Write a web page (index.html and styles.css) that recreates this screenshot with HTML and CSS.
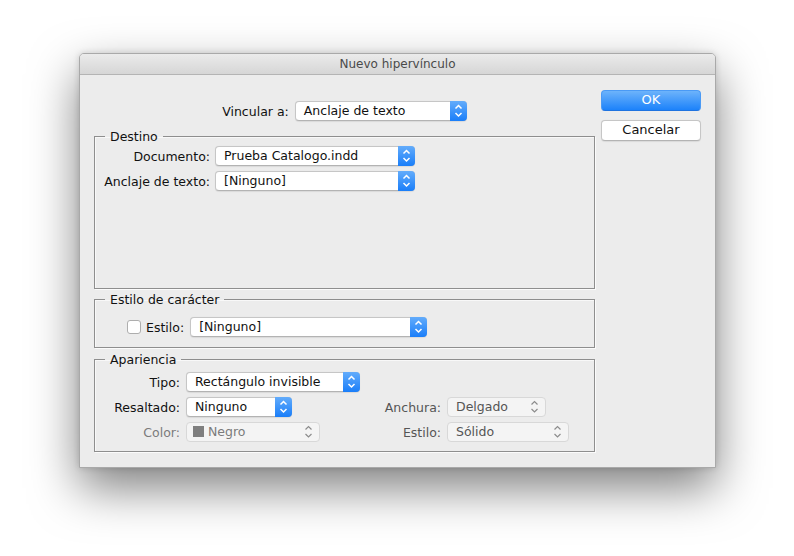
FILE: index.html
```html
<!DOCTYPE html>
<html lang="es">
<head>
<meta charset="utf-8">
<title>Nuevo hipervínculo</title>
<link rel="stylesheet" href="styles.css">
</head>
<body>
<div class="window">
  <div class="titlebar">Nuevo hipervínculo</div>
  <div class="content">
    <div class="main">
      <div class="link-row">
        <span class="label">Vincular a:</span>
        <div class="popup pw-vinc"><span class="val">Anclaje de texto</span><span class="step"><svg width="17" height="20" viewBox="0 0 17 20"><path d="M5.5 7.5 L8.5 4.5 L11.5 7.5 M5.5 12 L8.5 15 L11.5 12" fill="none" stroke="#fff" stroke-width="1.5"/></svg></span></div>
      </div>

      <fieldset class="group g-destino">
        <legend>Destino</legend>
        <div class="form-grid dest-grid">
          <span class="label">Documento:</span>
          <div class="popup pw-doc"><span class="val">Prueba Catalogo.indd</span><span class="step"><svg width="17" height="20" viewBox="0 0 17 20"><path d="M5.5 7.5 L8.5 4.5 L11.5 7.5 M5.5 12 L8.5 15 L11.5 12" fill="none" stroke="#fff" stroke-width="1.5"/></svg></span></div>
          <span class="label">Anclaje de texto:</span>
          <div class="popup pw-doc"><span class="val">[Ninguno]</span><span class="step"><svg width="17" height="20" viewBox="0 0 17 20"><path d="M5.5 7.5 L8.5 4.5 L11.5 7.5 M5.5 12 L8.5 15 L11.5 12" fill="none" stroke="#fff" stroke-width="1.5"/></svg></span></div>
        </div>
      </fieldset>

      <fieldset class="group g-estilo">
        <legend>Estilo de carácter</legend>
        <div class="estilo-row">
          <span class="checkbox"></span>
          <span class="label">Estilo:</span>
          <div class="popup pw-estilo"><span class="val">[Ninguno]</span><span class="step"><svg width="17" height="20" viewBox="0 0 17 20"><path d="M5.5 7.5 L8.5 4.5 L11.5 7.5 M5.5 12 L8.5 15 L11.5 12" fill="none" stroke="#fff" stroke-width="1.5"/></svg></span></div>
        </div>
      </fieldset>

      <fieldset class="group g-apar">
        <legend>Apariencia</legend>
        <div class="apar-grid">
          <span class="label">Tipo:</span>
          <div class="popup pw-tipo"><span class="val">Rectángulo invisible</span><span class="step"><svg width="17" height="20" viewBox="0 0 17 20"><path d="M5.5 7.5 L8.5 4.5 L11.5 7.5 M5.5 12 L8.5 15 L11.5 12" fill="none" stroke="#fff" stroke-width="1.5"/></svg></span></div>
          <span></span>

          <span class="label">Resaltado:</span>
          <div class="popup pw-res"><span class="val">Ninguno</span><span class="step"><svg width="17" height="20" viewBox="0 0 17 20"><path d="M5.5 7.5 L8.5 4.5 L11.5 7.5 M5.5 12 L8.5 15 L11.5 12" fill="none" stroke="#fff" stroke-width="1.5"/></svg></span></div>
          <div class="right-pair">
            <span class="label dim">Anchura:</span>
            <div class="popup disabled pw-anch"><span class="val dim">Delgado</span><span class="step"><svg width="17" height="20" viewBox="0 0 17 20"><path d="M5.5 7.5 L8.5 4.5 L11.5 7.5 M5.5 12 L8.5 15 L11.5 12" fill="none" stroke="#8c8c8c" stroke-width="1.2"/></svg></span></div>
          </div>

          <span class="label dim2">Color:</span>
          <div class="popup disabled pw-color"><span class="val dim2"><span class="swatch"></span>Negro</span><span class="step"><svg width="17" height="20" viewBox="0 0 17 20"><path d="M5.5 7.5 L8.5 4.5 L11.5 7.5 M5.5 12 L8.5 15 L11.5 12" fill="none" stroke="#8c8c8c" stroke-width="1.2"/></svg></span></div>
          <div class="right-pair">
            <span class="label dim">Estilo:</span>
            <div class="popup disabled pw-sol"><span class="val dim">Sólido</span><span class="step"><svg width="17" height="20" viewBox="0 0 17 20"><path d="M5.5 7.5 L8.5 4.5 L11.5 7.5 M5.5 12 L8.5 15 L11.5 12" fill="none" stroke="#8c8c8c" stroke-width="1.2"/></svg></span></div>
          </div>
        </div>
      </fieldset>
    </div>

    <div class="buttons">
      <button class="btn btn-ok">OK</button>
      <button class="btn btn-cancel">Cancelar</button>
    </div>
  </div>
</div>
</body>
</html>
```

FILE: styles.css
```css
* { box-sizing: border-box; }

html, body {
  margin: 0;
  padding: 0;
  background: #ffffff;
}

html { height: 100%; }

body {
  min-height: 556px;
  font-family: "DejaVu Sans", "Liberation Sans", sans-serif;
  font-size: 12.5px;
  color: #111;
  padding-top: 53px;
  padding-left: 79px;
}

.window {
  width: 637px;
  background: #ececec;
  border: 1px solid #a9a9a9;
  border-radius: 5px 5px 0 0;
  box-shadow: 0 20px 48px rgba(0, 0, 0, 0.5), 0 0 6px rgba(0, 0, 0, 0.15);
}

.titlebar {
  height: 21px;
  border-bottom: 1px solid #b4b4b4;
  background: linear-gradient(#ebebeb, #d6d6d6);
  border-radius: 4px 4px 0 0;
  text-align: center;
  font-size: 12px;
  line-height: 20px;
  color: #4a4a4a;
}

.content {
  display: flex;
  padding: 0 14px 0 14px;
  gap: 6px;
}

.main {
  width: 501px;
  padding-top: 26px;
  padding-bottom: 15px;
}

.link-row {
  display: flex;
  justify-content: center;
  align-items: center;
  gap: 6px;
}

.label {
  white-space: nowrap;
  color: #111;
}

/* popups */
.popup {
  display: flex;
  align-items: center;
  height: 20px;
  background: #fff;
  border: 1px solid #c6c6c6;
  border-bottom-color: #b3b3b3;
  border-radius: 4px;
  box-shadow: 0 0.5px 1px rgba(0,0,0,0.08);
}

.popup .val {
  flex: 1;
  padding-left: 8px;
  padding-bottom: 1px;
  white-space: nowrap;
  overflow: hidden;
  color: #111;
  display: flex;
  align-items: center;
}

.popup .step {
  width: 17px;
  height: 20px;
  margin: -1px -1px -1px 0;
  border-radius: 0 4px 4px 0;
  background: linear-gradient(#63acfb, #1a7ef9);
  display: flex;
}

.popup.disabled {
  background: #f4f4f4;
  border-color: #d8d8d8;
  box-shadow: none;
}

.popup.disabled .step {
  background: none;
  margin: 0 2px 0 0;
  height: 18px;
}

.popup.disabled .step svg {
  margin-top: -1px;
}

.pw-vinc { width: 172px; }
.pw-doc { width: 200px; }
.pw-estilo { width: 237px; }
.pw-tipo { width: 174px; }
.pw-res { width: 106px; }
.pw-color { width: 134px; }
.pw-anch { width: 99px; }
.pw-sol { width: 122px; }

.dim { color: #555 !important; }
.dim2 { color: #7b7b7b !important; }

.swatch {
  display: inline-block;
  width: 11px;
  height: 11px;
  background: #7f7f7f;
  margin-right: 4px;
  margin-left: -2px;
}

/* groups */
.group {
  margin: 0;
  padding: 0;
  border: 1px solid #8e8e8e;
  box-shadow: 1px 1px 0 #fbfbfb, inset 1px 1px 0 #f8f8f8;
  min-width: 0;
}

.group legend {
  margin-left: 10px;
  padding: 0 5px;
  line-height: 15px;
  color: #111;
}

.g-destino { margin-top: 8px; }
.g-estilo { margin-top: 3px; }
.g-apar { margin-top: 4px; }

.form-grid {
  display: grid;
  grid-template-columns: 107px auto;
  column-gap: 5px;
  row-gap: 5px;
  align-items: center;
  justify-content: start;
}

.form-grid .label { text-align: right; }

.dest-grid {
  padding: 2px 0 0 8px;
  height: 144px;
  align-content: start;
}

.estilo-row {
  display: flex;
  align-items: center;
  padding: 10px 0 10px 32px;
}

.checkbox {
  width: 14px;
  height: 14px;
  background: #fff;
  border: 1px solid #aeaeae;
  border-radius: 3px;
  margin-right: 5px;
}

.estilo-row .label { margin-right: 6px; }

.apar-grid {
  display: grid;
  grid-template-columns: 85px 174px 1fr;
  column-gap: 6px;
  row-gap: 5px;
  align-items: center;
  padding: 5px 0 9px 0;
}

.apar-grid > .label { text-align: right; }

.right-pair {
  display: flex;
  align-items: center;
  gap: 6px;
}

.right-pair .label {
  width: 75px;
  text-align: right;
}

/* buttons */
.buttons {
  width: 100px;
  padding-top: 15px;
  display: flex;
  flex-direction: column;
  gap: 9px;
}

.btn {
  height: 21px;
  width: 100px;
  font-family: inherit;
  font-size: 13px;
  border-radius: 4px;
  padding: 0 0 1px 0;
  line-height: 18px;
}

.btn-ok {
  color: #fff;
  background: linear-gradient(#6db3fb, #1c82fa);
  border: 1px solid #4a9af5;
  border-bottom-color: #1f73e0;
}

.btn-cancel {
  color: #111;
  background: #fff;
  border: 1px solid #c6c6c6;
  border-bottom-color: #b3b3b3;
  box-shadow: 0 0.5px 1px rgba(0,0,0,0.08);
}
```
